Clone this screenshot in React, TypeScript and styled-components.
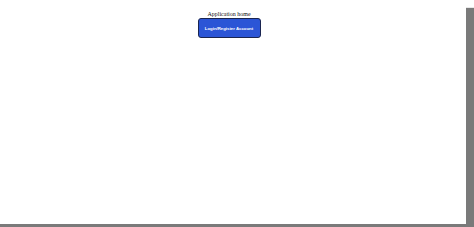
import { FunctionComponent } from "react";
import styled, { createGlobalStyle } from "styled-components";

const GlobalStyle = createGlobalStyle`
  html {
    overflow: hidden;
  }
  body {
    margin: 0;
    padding: 0;
    background: #ffffff;
  }
`;

const Frame = styled.div`
  width: 474px;
  height: 227px;
  overflow: hidden;
  background: #ffffff;
`;

const Page = styled.div`
  width: 474px;
  height: 224px;
  margin-left: -8px;
  background: #ffffff;
  box-shadow: 8px 8px 1px 0 #7a7a7a;
  display: flex;
  flex-direction: column;
  align-items: center;
  padding-top: 11px;
  box-sizing: border-box;
  font-family: "Liberation Serif", serif;
`;

const Title = styled.div`
  font-size: 6px;
  line-height: 7px;
  color: #111111;
`;

const Button = styled.button`
  width: 63px;
  height: 20px;
  background: #2b55d6;
  color: #ffffff;
  border: 1px solid #1a2550;
  border-radius: 3px;
  font-family: "Liberation Sans", Arial, sans-serif;
  font-size: 4.3px;
  font-weight: 700;
  padding: 0;
  cursor: pointer;
`;

const App: FunctionComponent = () => {
  return (
    <>
      <GlobalStyle />
      <Frame>
        <Page>
          <Title>Application home</Title>
          <Button>Login/Register Account</Button>
        </Page>
      </Frame>
    </>
  );
};

export default App;
